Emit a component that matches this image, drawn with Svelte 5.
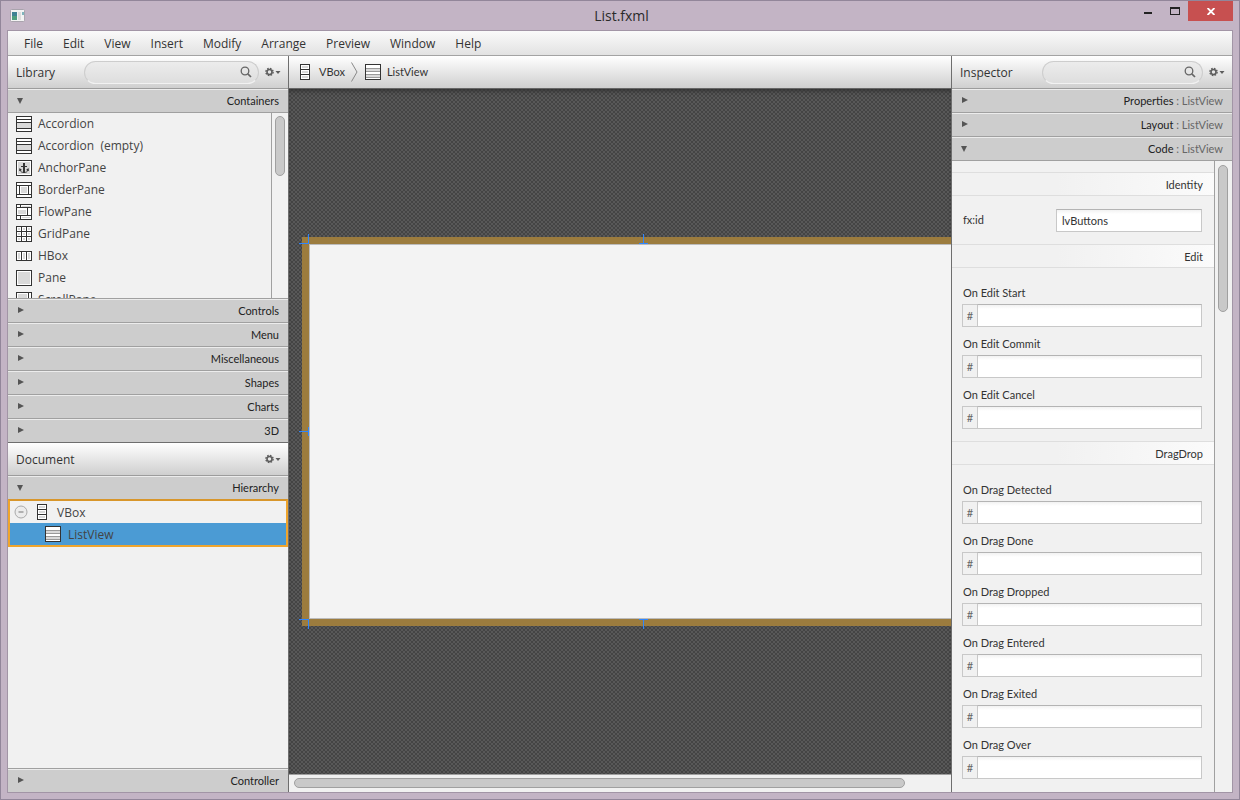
<script>
  const menus = ['File', 'Edit', 'View', 'Insert', 'Modify', 'Arrange', 'Preview', 'Window', 'Help'];
  const containers = [
    ['accordion', 'Accordion'],
    ['accordion', 'Accordion\u00a0 (empty)'],
    ['anchor', 'AnchorPane'],
    ['border', 'BorderPane'],
    ['flow', 'FlowPane'],
    ['grid', 'GridPane'],
    ['hbox', 'HBox'],
    ['pane', 'Pane'],
    ['scroll', 'ScrollPane']
  ];
  const closedSections = ['Controls', 'Menu', 'Miscellaneous', 'Shapes', 'Charts', '3D'];
  const inspectorSections = [
    ['Properties', false],
    ['Layout', false],
    ['Code', true]
  ];
  const groups = [
    { title: 'Edit', fields: ['On Edit Start', 'On Edit Commit', 'On Edit Cancel'] },
    {
      title: 'DragDrop',
      fields: ['On Drag Detected', 'On Drag Done', 'On Drag Dropped', 'On Drag Entered', 'On Drag Exited', 'On Drag Over']
    }
  ];
  let fxId = $state('lvButtons');
  const slug = (s) => s.toLowerCase().replaceAll(' ', '-');
</script>

{#snippet icon(name)}
  <svg class="icon" width="16" height="16" viewBox="0 0 16 16" shape-rendering="crispEdges" aria-hidden="true">
    {#if name === 'hbox'}
      <path fill="#333" d="M0 3h16v10H0z" />
      <path fill="#fff" d="M1 4h4v8H1zM6 4h4v8H6zM11 4h4v8h-4z" />
      <path fill="#d9d9d9" d="M2 5h2v6H2zM7 5h2v6H7zM12 5h2v6h-2z" />
    {:else if name === 'vbox'}
      <path fill="#333" d="M3 0h10v16H3z" />
      <path fill="#fff" d="M4 1h8v4H4zM4 6h8v4H4zM4 11h8v4H4z" />
      <path fill="#d9d9d9" d="M5 2h6v2H5zM5 7h6v2H5zM5 12h6v2H5z" />
    {:else}
      <path fill="#333" d="M0 0h16v16H0z" />
      <path fill="#fff" d="M1 1h14v14H1z" />
      {#if name === 'accordion'}
        <path fill="#333" d="M1 3h14v1H1zM1 6h14v1H1zM1 12h14v1H1z" />
        <path fill="#d9d9d9" d="M1 7h14v5H1z" />
      {:else if name === 'anchor'}
        <path fill="#d9d9d9" d="M2 2h12v12H2z" />
        <g fill="none" stroke="#333" shape-rendering="auto">
          <path stroke-width="2" d="M8 3v10" />
          <path d="M5 6.5h6" />
          <path d="M4 10c.5 1.800 2 2.500 4 2.500s3.500-.7 4-2.500" />
        </g>
        <path fill="#333" shape-rendering="auto" d="M3 11l.5-3L6 10zM13 11l-.5-3L10 10z" />
      {:else if name === 'border'}
        <path fill="#333" d="M1 3h14v1H1zM1 12h14v1H1zM3 4h1v8H3zM12 4h1v8h-1z" />
        <path fill="#d9d9d9" d="M5 5h6v6H5z" />
      {:else if name === 'flow'}
        <path fill="#333" d="M1 3h14v1H1zM1 11h14v1H1zM4 1h1v2H4zM11 4h1v7h-1zM4 12h1v3H4z" />
        <path fill="#d9d9d9" d="M6 2h8v1H6zM2 6h8v4H2zM6 13h8v1H6z" />
      {:else if name === 'grid'}
        <path fill="#333" d="M5 1h1v14H5zM10 1h1v14h-1zM1 5h14v1H1zM1 10h14v1H1z" />
        <path
          fill="#d9d9d9"
          d="M2 2h2v2H2zM7 2h2v2H7zM12 2h2v2h-2zM2 7h2v2H2zM7 7h2v2H7zM12 7h2v2h-2zM2 12h2v2H2zM7 12h2v2H7zM12 12h2v2h-2z"
        />
      {:else if name === 'pane'}
        <path fill="#d9d9d9" d="M2 2h12v12H2z" />
      {:else if name === 'scroll'}
        <path fill="#d9d9d9" d="M2 2h9v9H2z" />
        <path fill="#333" d="M12 1h1v14h-1zM1 12h14v1H1z" />
      {:else if name === 'list'}
        <path fill="#d9d9d9" d="M1 5h14v2H1zM1 11h14v2H1z" />
        <path fill="#999" d="M1 4h14v1H1zM1 7h14v1H1zM1 10h14v1H1zM1 13h14v1H1z" />
      {/if}
    {/if}
  </svg>
{/snippet}

{#snippet gear(label)}
  <button class="gear" aria-label={label}>
    <svg width="16" height="10" viewBox="0 0 16 10" aria-hidden="true">
      <circle cx="4.500" cy="5" r="3.600" fill="none" stroke="#5c5c5c" stroke-width="1.400" stroke-dasharray="1.600 1.230" />
      <circle cx="4.500" cy="5" r="2.500" fill="none" stroke="#5c5c5c" stroke-width="1.500" />
      <path fill="#5c5c5c" d="M10.500 4h5L13 7z" />
    </svg>
  </button>
{/snippet}

{#snippet search(label)}
  <div class="search">
    <input type="text" aria-label={label} />
    <svg width="12" height="12" viewBox="0 0 12 12" aria-hidden="true">
      <circle cx="5" cy="5" r="3.800" fill="none" stroke="#666" stroke-width="1.300" />
      <path d="M7.800 7.800L11 11" stroke="#666" stroke-width="1.700" />
    </svg>
  </div>
{/snippet}

{#snippet section(title, open, suffix)}
  <button class="section" aria-expanded={open}>
    <svg width="8" height="8" viewBox="0 0 8 8" aria-hidden="true">
      <path fill="#555" d={open ? 'M1 1h6L4 7z' : 'M2 0l6 3-6 3z'} />
    </svg>
    <span>{title}{#if suffix}<i>&nbsp;: {suffix}</i>{/if}</span>
  </button>
{/snippet}

<div class="window">
  <header class="titlebar">
    <svg class="app" width="16" height="14" viewBox="0 0 16 14" aria-hidden="true">
      <rect x="0.500" y="0.500" width="14" height="12" rx="1" fill="#f3f3f3" stroke="#a9a3ad" />
      <path fill="#3f8293" d="M2 3h5v5H2z" />
      <path fill="#4f9e7e" d="M2 7h5v4H2z" />
      <path fill="#dcdcdc" d="M8 3h3v8H8z" />
      <path fill="#7fb5bd" d="M12 3h2v3h-2z" />
    </svg>
    <h1>List.fxml</h1>
    <div class="controls">
      <button class="min" aria-label="Minimize"><svg width="8" height="6" viewBox="0 0 8 6"><path fill="#222" d="M0 4h8v2H0z" /></svg></button>
      <button class="max" aria-label="Maximize"><svg width="10" height="8" viewBox="0 0 10 8"><path fill="#222" fill-rule="evenodd" d="M0 0h10v8H0zM1 2v5h8V2z" /></svg></button>
      <button class="close" aria-label="Close"><svg width="8" height="7" viewBox="0 0 8 7"><path fill="none" stroke="#fff" stroke-width="1.800" d="M.6 0l6.800 7M7.400 0L.6 7" /></svg></button>
    </div>
  </header>

  <div class="client">
    <nav class="menubar">
      {#each menus as m}<button>{m}</button>{/each}
    </nav>

    <main>
      <aside class="left">
        <section class="library">
          <div class="head"><h2>Library</h2>{@render search('Search library')}{@render gear('Library options')}</div>
          {@render section('Containers', true)}
          <div class="list">
            <ul>
              {#each containers as [name, label]}
                <li>{@render icon(name)}{label}</li>
              {/each}
            </ul>
            <div class="vtrack"><div class="thumb short"></div></div>
          </div>
          {#each closedSections as s}{@render section(s, false)}{/each}
        </section>
        <section class="document">
          <div class="head"><h2>Document</h2>{@render gear('Document options')}</div>
          {@render section('Hierarchy', true)}
          <div class="tree">
            <div class="ring">
              <div class="node">
                <button class="toggle" aria-label="Collapse">
                  <svg width="14" height="14" viewBox="0 0 14 14"><circle cx="7" cy="7" r="6" fill="#ececec" stroke="#aaa" /><path stroke="#777" d="M4.500 7h5" /></svg>
                </button>
                {@render icon('vbox')}<span>VBox</span>
              </div>
              <div class="node child">{@render icon('list')}<span>ListView</span></div>
            </div>
          </div>
          {@render section('Controller', false)}
        </section>
      </aside>

      <section class="center">
        <div class="head crumbs">
          {@render icon('vbox')}<span>VBox</span>
          <svg class="chev" width="7" height="20" viewBox="0 0 7 20" aria-hidden="true"><path fill="none" stroke="#888" d="M.5.5l5.500 9.500-5.500 9.500" /></svg>
          {@render icon('list')}<span>ListView</span>
        </div>
        <div class="canvas">
          <div class="stage">
            <svg class="mark tl" width="10" height="10" viewBox="0 0 10 10"><path fill="#2e86ff" d="M9 0h1v10H9zM0 9h10v1H0z" /></svg>
            <svg class="mark bl" width="10" height="10" viewBox="0 0 10 10"><path fill="#2e86ff" d="M9 0h1v10H9zM0 0h10v1H0z" /></svg>
            <svg class="mark ml" width="10" height="9" viewBox="0 0 10 9"><path fill="#2e86ff" d="M9 0h1v9H9zM0 4h9v1H0z" /></svg>
            <svg class="mark tm" width="9" height="10" viewBox="0 0 9 10"><path fill="#2e86ff" d="M4 0h1v10H4zM0 9h9v1H0z" /></svg>
            <svg class="mark bm" width="9" height="10" viewBox="0 0 9 10"><path fill="#2e86ff" d="M4 0h1v10H4zM0 0h9v1H0z" /></svg>
          </div>
        </div>
        <div class="htrack"><div class="thumb"></div></div>
      </section>

      <aside class="right">
        <div class="head"><h2>Inspector</h2>{@render search('Search inspector')}{@render gear('Inspector options')}</div>
        {#each inspectorSections as [s, open]}{@render section(s, open, 'ListView')}{/each}
        <div class="props">
          <form>
            <h3>Identity</h3>
            <div class="inline"><label for="fx-id">fx:id</label><input id="fx-id" type="text" bind:value={fxId} /></div>
            {#each groups as g}
              <h3>{g.title}</h3>
              <div class="group">
                {#each g.fields as f}
                  <label for={slug(f)}>{f}</label>
                  <div class="hash"><span>#</span><input id={slug(f)} type="text" /></div>
                {/each}
              </div>
            {/each}
          </form>
          <div class="vtrack"><div class="thumb long"></div></div>
        </div>
      </aside>
    </main>
  </div>
</div>

<style>
  :global(body) {
    margin: 0;
  }
  .window,
  .window * {
    box-sizing: border-box;
  }
  .window {
    --small: 11px/16px Lato, 'Open Sans', sans-serif;
    height: 100vh;
    display: flex;
    flex-direction: column;
    padding: 0 6px 6px;
    border: 1px solid #92869a;
    background: #c3b4c5;
    color: #333;
    font: 12px/16px 'Open Sans', 'Noto Sans', sans-serif;
    overflow: hidden;
  }
  button {
    border: 0;
    padding: 0;
    background: none;
    font: inherit;
    color: inherit;
  }
  input {
    font: inherit;
    color: inherit;
    outline: 0;
    min-width: 0;
  }
  svg {
    display: block;
    flex: none;
  }
  h1, h2, h3, ul {
    margin: 0;
    padding: 0;
    font-weight: 400;
  }

  .titlebar {
    flex: none;
    height: 29px;
    display: grid;
    grid-template-columns: 1fr auto 1fr;
    align-items: center;
    padding-left: 3px;
  }
  h1 {
    font-size: 14px;
    line-height: 29px;
    color: #2a2a2a;
  }
  .controls {
    display: flex;
    justify-content: flex-end;
    align-self: start;
    height: 20px;
  }
  .controls button {
    display: flex;
    justify-content: center;
    align-items: center;
    width: 27px;
  }
  .controls .close {
    width: 45px;
    background: #c75050;
  }

  .client {
    flex: 1;
    min-height: 0;
    display: flex;
    flex-direction: column;
    border: 1px solid #a295a6;
  }
  .menubar {
    flex: none;
    display: flex;
    height: 25px;
    padding-left: 6px;
    background: linear-gradient(#fafafa, #e2e2e2);
    border-bottom: 1px solid #a3a3a3;
  }
  .menubar button {
    padding: 2px 10px 0;
  }
  main {
    flex: 1;
    min-height: 0;
    display: grid;
    grid-template-columns: 281px minmax(0, 1fr) 281px;
    background: #f1f1f1;
  }
  .left,
  .center,
  .right {
    display: flex;
    flex-direction: column;
    min-height: 0;
    min-width: 0;
  }
  .left {
    border-right: 1px solid #6e6e6e;
  }
  .right {
    border-left: 1px solid #6e6e6e;
  }
  .head {
    flex: none;
    height: 33px;
    display: flex;
    align-items: center;
    padding: 0 7px 0 8px;
    background: linear-gradient(#fff, #cfcfcf);
    border-bottom: 1px solid #9c9c9c;
  }
  h2 {
    flex: 1;
    padding-top: 2px;
    font-size: 12px;
  }
  .search {
    display: flex;
    align-items: center;
    width: 175px;
    height: 23px;
    padding: 0 6px 0 10px;
    border: 1px solid #cdcdcd;
    border-bottom-color: #f2f2f2;
    border-radius: 12px;
    background: linear-gradient(#ececec, #dedede);
  }
  .right .search {
    width: 161px;
  }
  .search input {
    flex: 1;
    border: 0;
    background: none;
  }
  .gear {
    margin-left: 6px;
  }

  .section {
    flex: none;
    height: 24px;
    display: flex;
    align-items: center;
    justify-content: space-between;
    padding: 0 9px 0 8px;
    background: #cdcdcd;
    border-top: 1px solid #ececec;
    border-bottom: 1px solid #a0a0a0;
    font: var(--small);
    color: #222;
  }
  .section i {
    font-style: normal;
    color: #666;
  }
  .document > .section:last-child {
    height: 23px;
    border-bottom: 0;
  }

  .library {
    flex: 387 1 0;
  }
  .document {
    flex: 349 1 0;
  }
  .library,
  .document {
    display: flex;
    flex-direction: column;
    min-height: 0;
  }
  .library > .section:last-child {
    border-bottom-color: #6e6e6e;
  }
  .list {
    flex: 1;
    min-height: 0;
    display: flex;
    overflow: hidden;
    border-bottom: 1px solid #a0a0a0;
  }
  .list ul {
    flex: 1;
    list-style: none;
  }
  .list li {
    display: flex;
    align-items: center;
    gap: 6px;
    height: 22px;
    padding-left: 8px;
    color: #444;
  }
  .vtrack {
    flex: none;
    width: 17px;
    padding: 3px 3px 0 3px;
    border-left: 1px solid #a0a0a0;
  }
  .props .vtrack {
    width: 18px;
    padding-top: 4px;
  }
  .thumb {
    background: #c9c9c9;
    border: 1px solid #a0a0a0;
    border-radius: 5px;
  }
  .short {
    height: 60px;
    width: 10px;
  }
  .long {
    height: 147px;
    width: 10px;
  }

  .tree {
    flex: 1;
    min-height: 0;
    border-bottom: 1px solid #a0a0a0;
  }
  .ring {
    margin-top: -1px;
    border: 2px solid #efa52d;
    border-top-color: #d8962b;
  }
  .node {
    display: flex;
    align-items: center;
    height: 22px;
    padding-left: 4px;
    color: #444;
  }
  .node .toggle {
    margin-right: 6px;
  }
  .node span {
    margin-left: 7px;
    padding-top: 2px;
  }
  .child {
    padding-left: 35px;
    background: #4b9bd4;
  }

  .crumbs {
    font: var(--small);
    border-bottom-color: #666;
  }
  .crumbs span {
    margin-left: 6px;
  }
  .crumbs .chev {
    margin: 0 7px 0 6px;
  }
  .canvas {
    flex: 1;
    min-height: 0;
    overflow: hidden;
    display: flex;
    align-items: center;
    padding-left: 13px;
    background: repeating-conic-gradient(#444 0 25%, #585858 0 50%) 0 0 / 4px 4px;
    box-shadow: inset 0 4px 4px -2px #333;
  }
  .stage {
    position: relative;
    flex: none;
    width: 683px;
    height: 389px;
    border: 7px solid #9c7c3e;
    background: #f3f3f3;
    box-shadow: inset 1px 1px #bbb, inset 0 -1px #bbb;
  }
  .mark {
    position: absolute;
  }
  .tl {
    left: -10px;
    top: -10px;
  }
  .bl {
    left: -10px;
    bottom: -10px;
  }
  .ml {
    left: -10px;
    top: 183px;
  }
  .tm {
    left: 330px;
    top: -10px;
  }
  .bm {
    left: 330px;
    bottom: -10px;
  }
  .htrack {
    flex: none;
    height: 18px;
    padding: 3px 46px 0 5px;
    border-top: 1px solid #a0a0a0;
    background: #f1f1f1;
  }
  .htrack .thumb {
    height: 10px;
  }

  .props {
    flex: 1;
    min-height: 0;
    display: flex;
    overflow: hidden;
  }
  form {
    flex: 1;
    min-width: 0;
    padding-top: 11px;
    font: var(--small);
  }
  h3 {
    height: 24px;
    padding-right: 11px;
    border-top: 1px solid #dedede;
    border-bottom: 1px solid #dedede;
    background: linear-gradient(90deg, #f1f1f1 40%, #fbfbfb);
    font-size: 11px;
    line-height: 24px;
    text-align: right;
  }
  .inline {
    display: flex;
    align-items: center;
    justify-content: space-between;
    height: 48px;
    padding: 0 12px 0 11px;
  }
  form input {
    height: 23px;
    border: 1px solid #c8c8c8;
    border-top-color: #b4b4b4;
    background: linear-gradient(#f2f2f2, #fff 4px);
    padding: 0 5px;
  }
  .inline input {
    width: 146px;
  }
  .group {
    padding: 16px 12px 12px 10px;
  }
  .group label {
    display: block;
    height: 20px;
    padding-left: 1px;
    line-height: 18px;
  }
  .hash {
    display: flex;
    height: 23px;
    margin-bottom: 8px;
  }
  .hash:last-child {
    margin-bottom: 0;
  }
  .hash span {
    width: 15px;
    border: 1px solid #c8c8c8;
    border-right: 0;
    line-height: 21px;
    text-align: center;
    color: #666;
  }
  .hash input {
    flex: 1;
  }
</style>
